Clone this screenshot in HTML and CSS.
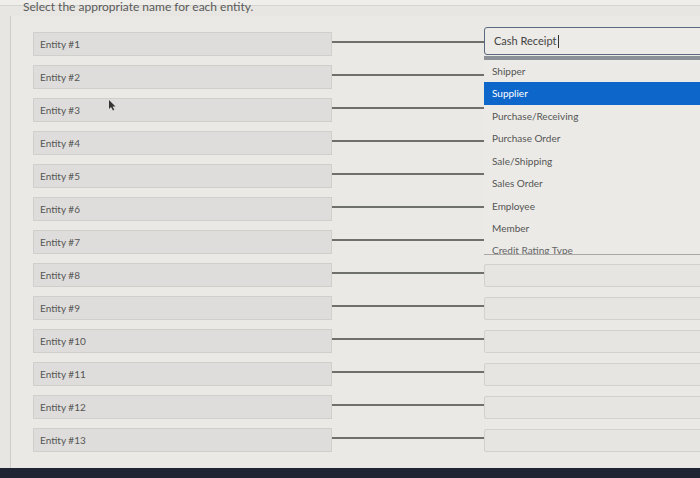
FILE: index.html
```html
<!DOCTYPE html>
<html lang="en">
<head>
    <meta charset="UTF-8">
    <meta name="viewport" content="width=device-width, initial-scale=1.0">
    <title>Match entities</title>
    <link rel="stylesheet" href="styles.css">
</head>
<body>
    <div class="screen">
        <div class="top-strip"></div>
        <p class="prompt">Select the appropriate name for each entity.</p>

        <div class="card">
            <div class="match-list">
                <div class="match-row">
                    <div class="entity">Entity #1</div>
                    <div class="link"></div>
                    <div class="slot slot-open">
                        <div class="combo">Cash Receipt<span class="caret"></span></div>
                        <div class="combo-bar"></div>
                        <ul class="options">
                            <li>Shipper</li>
                            <li class="selected">Supplier</li>
                            <li>Purchase/Receiving</li>
                            <li>Purchase Order</li>
                            <li>Sale/Shipping</li>
                            <li>Sales Order</li>
                            <li>Employee</li>
                            <li>Member</li>
                            <li class="cut">Credit Rating Type</li>
                        </ul>
                    </div>
                </div>
                <div class="match-row">
                    <div class="entity">Entity #2</div>
                    <div class="link"></div>
                    <div class="slot"></div>
                </div>
                <div class="match-row">
                    <div class="entity">Entity #3</div>
                    <div class="link"></div>
                    <div class="slot"></div>
                </div>
                <div class="match-row">
                    <div class="entity">Entity #4</div>
                    <div class="link"></div>
                    <div class="slot"></div>
                </div>
                <div class="match-row">
                    <div class="entity">Entity #5</div>
                    <div class="link"></div>
                    <div class="slot"></div>
                </div>
                <div class="match-row">
                    <div class="entity">Entity #6</div>
                    <div class="link"></div>
                    <div class="slot"></div>
                </div>
                <div class="match-row">
                    <div class="entity">Entity #7</div>
                    <div class="link"></div>
                    <div class="slot"></div>
                </div>
                <div class="match-row">
                    <div class="entity">Entity #8</div>
                    <div class="link"></div>
                    <div class="slot"></div>
                </div>
                <div class="match-row">
                    <div class="entity">Entity #9</div>
                    <div class="link"></div>
                    <div class="slot"></div>
                </div>
                <div class="match-row">
                    <div class="entity">Entity #10</div>
                    <div class="link"></div>
                    <div class="slot"></div>
                </div>
                <div class="match-row">
                    <div class="entity">Entity #11</div>
                    <div class="link"></div>
                    <div class="slot"></div>
                </div>
                <div class="match-row">
                    <div class="entity">Entity #12</div>
                    <div class="link"></div>
                    <div class="slot"></div>
                </div>
                <div class="match-row">
                    <div class="entity">Entity #13</div>
                    <div class="link"></div>
                    <div class="slot"></div>
                </div>
            </div>

            <!-- mouse pointer -->
            <svg class="pointer" width="8" height="11" viewBox="0 0 8 11">
                <path d="M1 0 L1 9 L3 7 L5 10.5 L6.3 9.8 L4.5 6.6 L7.5 6.5 Z" fill="#333"/>
            </svg>
        </div>

        <div class="bottom-bar"></div>
    </div>
</body>
</html>
```

FILE: styles.css
```css
html, body {
    margin: 0;
    padding: 0;
}
body {
    font-family: Lato, 'Open Sans', sans-serif;
    background-color: #e7e6e2;
    color: #555;
    overflow: hidden;
}
.screen {
    position: relative;
    width: 700px;
    height: 478px;
    overflow: hidden;
    display: flex;
    flex-direction: column;
}
.top-strip {
    height: 5px;
    background-color: #efeeeb;
    border-bottom: 1px solid #d6d5d1;
}
.prompt {
    margin: -6px 0 0 23px;
    height: 16px;
    font-size: 12px;
    line-height: 14px;
    color: #5a5a5a;
    overflow: hidden;
}
.card {
    position: relative;
    flex: 1;
    margin-left: 10px;
    border-left: 1px solid #cfcecb;
    background-color: #eae9e5;
    padding-top: 16px;
}
.match-list {
    display: flex;
    flex-direction: column;
    gap: 9px;
}
.match-row {
    display: flex;
    align-items: center;
    height: 24px;
}
.entity {
    width: 299px;
    height: 24px;
    margin-left: 22px;
    padding-left: 6px;
    box-sizing: border-box;
    background-color: #dedddb;
    border: 1px solid #d0cfcb;
    font-size: 10px;
    line-height: 22px;
    color: #555;
    flex-shrink: 0;
}
.link {
    flex: 1;
    height: 2px;
    margin-top: -5px;
    background-color: #6f6f6c;
}
.slot {
    position: relative;
    width: 226px;
    height: 23px;
    margin-right: -10px;
    box-sizing: border-box;
    border: 1px solid #d2d1cd;
    border-radius: 2px;
    background-color: #e6e5e1;
    flex-shrink: 0;
}
.slot-open {
    border: none;
    background: none;
}
.combo {
    position: absolute;
    top: -6px;
    left: 0;
    right: 0;
    height: 28px;
    box-sizing: border-box;
    border: 1.5px solid #5b6a7e;
    border-radius: 3px;
    background-color: #ecebe8;
    padding-left: 9px;
    font-size: 11px;
    line-height: 25px;
    color: #444;
}
.caret {
    display: inline-block;
    width: 1px;
    height: 13px;
    margin-left: 1px;
    vertical-align: middle;
    background-color: #333;
}
.combo-bar {
    position: absolute;
    top: 23px;
    left: 0;
    right: 0;
    height: 4px;
    background-color: #8c9197;
}
.options {
    position: absolute;
    top: 27px;
    left: 0;
    right: 0;
    height: 194px;
    margin: 0;
    padding: 0;
    list-style: none;
    background-color: #ebeae6;
    border-bottom: 1px solid #a9a8a4;
    overflow: hidden;
    z-index: 2;
}
.options li {
    height: 22.5px;
    padding-left: 8px;
    font-size: 10px;
    line-height: 22px;
    color: #555;
}
.options li.selected {
    background-color: #0d67cb;
    color: #fff;
}
.options li.cut {
    line-height: 21px;
    color: #666;
    text-decoration: underline;
    text-decoration-color: #999;
}
.pointer {
    position: absolute;
    left: 97px;
    top: 84px;
}
.bottom-bar {
    height: 10px;
    background-color: #1f2532;
}
```
